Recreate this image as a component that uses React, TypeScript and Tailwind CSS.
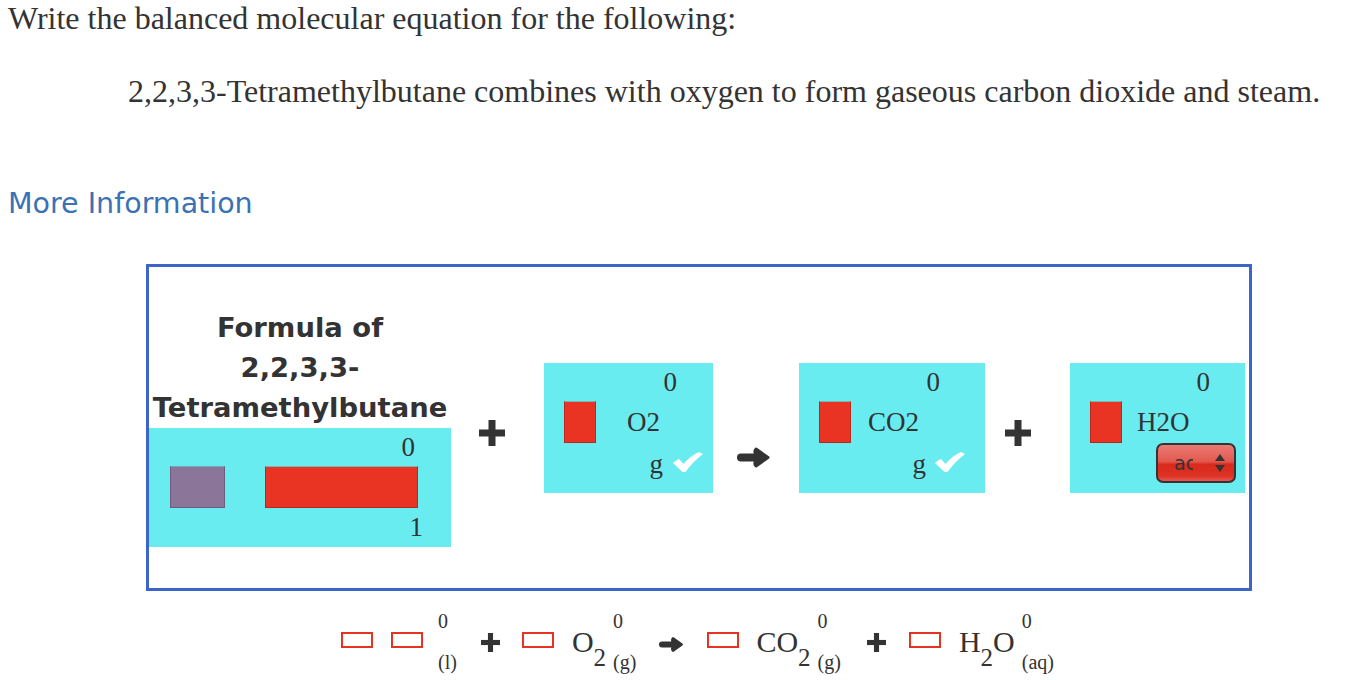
import React from "react";

const serif = "font-['Liberation_Serif',_'Times_New_Roman',_serif]";
const sans = "font-['DejaVu_Sans',_Verdana,_sans-serif]";

const Plus = ({ size }: { size: number }) => (
  <svg width={size} height={size} viewBox="0 0 26 26">
    <rect x="9.5" y="0" width="7" height="26" fill="#333" />
    <rect x="0" y="9.5" width="26" height="7" fill="#333" />
  </svg>
);

const Arrow = ({ w, h }: { w: number; h: number }) => (
  <svg width={w} height={h} viewBox="0 0 34 23">
    <line x1="4" y1="11.5" x2="22" y2="11.5" stroke="#333" strokeWidth="8" strokeLinecap="round" />
    <path
      d="M19 3 L31 11.5 L19 20 Q17 18 18.5 15 L21 11.5 L18.5 8 Q17 5 19 3 Z"
      fill="#333"
      stroke="#333"
      strokeWidth="3"
      strokeLinejoin="round"
    />
  </svg>
);

const Check = () => (
  <svg width="30" height="20" viewBox="0 0 30 20">
    <path d="M0 11 Q3 8 6 7 L10.5 12 Q17 4 26 0 L30 2 Q20 9.5 12.5 20 L9.5 20 Z" fill="#fff" />
  </svg>
);

const RedSquare = () => (
  <div className="w-[32px] h-[42px] bg-[#e93323] border border-[#b8291c] border-t-[#7ab4b4] shrink-0" />
);

const OutlineBox = ({ className = "" }: { className?: string }) => (
  <div className={`w-[32px] h-[16px] border-2 border-[#e83324] shrink-0 ${className}`} />
);

type StackProps = { state: string; className?: string };

const StateStack = ({ state, className = "" }: StackProps) => (
  <div className={`flex flex-col text-[20px] leading-[20px] text-[#333] ${serif} ${className}`}>
    <span>0</span>
    <span className="mt-[21px]">{state}</span>
  </div>
);

const Species = ({ children, className = "" }: { children: React.ReactNode; className?: string }) => (
  <span className={`text-[30px] leading-[34px] text-[#333] whitespace-nowrap mt-[14px] ${serif} ${className}`}>
    {children}
  </span>
);

const Sub = ({ children }: { children: React.ReactNode }) => (
  <span className="text-[25px] leading-none align-[-14px]">{children}</span>
);

export default function App() {
  return (
    <main className="w-[1354px] h-[680px] overflow-hidden bg-white text-[#333]">
      <p className={`${serif} text-[32px] leading-[36px] pl-[8px] -mb-[2px]`}>
        Write the balanced molecular equation for the following:
      </p>
      <p className={`${serif} text-[32px] leading-[32px] pl-[128px] mt-[41px]`}>
        2,2,3,3-Tetramethylbutane combines with oxygen to form gaseous carbon dioxide and steam.
      </p>
      <p className={`${sans} text-[28.5px] leading-[32px] pl-[8px] mt-[81px] text-[#3a72b4]`}>
        More Information
      </p>

      <section className="ml-[146px] mt-[44px] w-[1106px] h-[327px] border-[3px] border-[#3d64c9] flex items-center">
        {/* reactant 1 */}
        <div className="w-[302px] flex flex-col">
          <h2 className={`${sans} font-bold text-[27.4px] leading-[40px] text-center text-[#333]`}>
            Formula of
            <br />
            2,2,3,3-
            <br />
            Tetramethylbutane
          </h2>
          <div className={`h-[119px] bg-[#69ecf0] flex flex-col ${serif} text-[27px] leading-[26px]`}>
            <span className="self-end pr-[36px] pt-[6px]">0</span>
            <div className="flex mt-[6px] pl-[21px] gap-[40px]">
              <div className="w-[55px] h-[42px] bg-[#8b7599] border border-[#6b5c80] border-t-[#74a9b4]" />
              <div className="w-[153px] h-[42px] bg-[#e93323] border border-[#b8291c] border-t-[#7ab4b4]" />
            </div>
            <span className="self-end pr-[28px] mt-[6px]">1</span>
          </div>
        </div>

        <div className="ml-[28px] mt-[10px]">
          <Plus size={26} />
        </div>

        {/* O2 */}
        <div className={`ml-[39px] w-[169px] h-[130px] bg-[#69ecf0] flex flex-col ${serif} text-[27px] leading-[26px]`}>
          <span className="self-end pr-[36px] pt-[6px]">0</span>
          <div className="flex items-start mt-[6px] pl-[20px] gap-[31px]">
            <RedSquare />
            <span className="mt-[8px]">O2</span>
          </div>
          <div className="flex items-start justify-end gap-[10px] pr-[10px] mt-[8px]">
            <span>g</span>
            <div className="mt-[1px]">
              <Check />
            </div>
          </div>
        </div>

        <div className="ml-[24px] mt-[60px]">
          <Arrow w={34} h={23} />
        </div>

        {/* CO2 */}
        <div className={`ml-[28px] w-[186px] h-[130px] bg-[#69ecf0] flex flex-col ${serif} text-[27px] leading-[26px]`}>
          <span className="self-end pr-[45px] pt-[6px]">0</span>
          <div className="flex items-start mt-[6px] pl-[20px] gap-[17px]">
            <RedSquare />
            <span className="mt-[8px]">CO2</span>
          </div>
          <div className="flex items-start justify-end gap-[9px] pr-[20px] mt-[8px]">
            <span>g</span>
            <div className="mt-[1px]">
              <Check />
            </div>
          </div>
        </div>

        <div className="ml-[20px] mt-[10px]">
          <Plus size={26} />
        </div>

        {/* H2O */}
        <div className={`ml-[39px] w-[175px] h-[130px] bg-[#69ecf0] flex flex-col ${serif} text-[27px] leading-[26px]`}>
          <span className="self-end pr-[35px] pt-[6px]">0</span>
          <div className="flex items-start mt-[6px] pl-[20px] gap-[15px]">
            <RedSquare />
            <span className="mt-[8px]">H2O</span>
          </div>
          <div className="flex justify-end pr-[9px]">
            <div className="w-[80px] h-[40px] rounded-[7px] border-2 border-[#333] bg-[linear-gradient(to_bottom,#ea7b74_0%,#e2594f_46%,#d92a1d_54%,#dc3124_85%,#e8564c_100%)] flex items-center pl-[16px] pr-[9px]">
              <span className={`${sans} text-[19px] leading-[22px] text-[#333] w-[19px] overflow-hidden whitespace-nowrap`}>
                ac
              </span>
              <svg className="ml-auto" width="10" height="18" viewBox="0 0 10 18">
                <path d="M5 0 L10 7 L0 7 Z" fill="#333" />
                <path d="M0 11 L10 11 L5 18 Z" fill="#333" />
              </svg>
            </div>
          </div>
        </div>
      </section>

      {/* summary equation */}
      <div className="flex items-start mt-[20px] pl-[341px]">
        <OutlineBox className="mt-[21px]" />
        <OutlineBox className="mt-[21px] ml-[18px]" />
        <StateStack state="(l)" className="ml-[15px]" />
        <div className="ml-[24px] mt-[22px]">
          <Plus size={19} />
        </div>
        <OutlineBox className="mt-[21px] ml-[22px]" />
        <Species className="ml-[18px]">
          O<Sub>2</Sub>
        </Species>
        <StateStack state="(g)" className="ml-[7px]" />
        <div className="ml-[23px] mt-[25px]">
          <Arrow w={25} h={17} />
        </div>
        <OutlineBox className="mt-[21px] ml-[23px]" />
        <Species className="ml-[17px]">
          CO<Sub>2</Sub>
        </Species>
        <StateStack state="(g)" className="ml-[7px]" />
        <div className="ml-[26px] mt-[22px]">
          <Plus size={19} />
        </div>
        <OutlineBox className="mt-[21px] ml-[23px]" />
        <Species className="ml-[18px]">
          H<Sub>2</Sub>O
        </Species>
        <StateStack state="(aq)" className="ml-[7px]" />
      </div>
    </main>
  );
}
